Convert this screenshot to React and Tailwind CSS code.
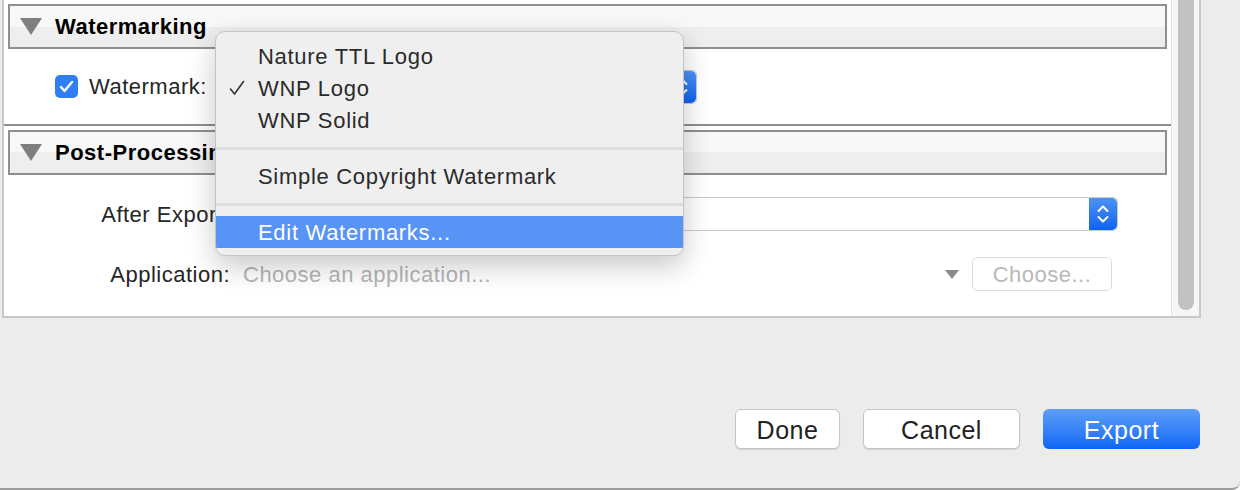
import React from 'react';

const Triangle = () => (
  <svg width="22" height="17" viewBox="0 0 22 17">
    <path d="M0 0 H22 L11 17 Z" fill="#7f7f7f" />
  </svg>
);

const Stepper = () => (
  <div className="flex h-full w-[28px] items-center justify-center rounded-r-[5px] bg-gradient-to-b from-[#4b93f8] to-[#0b62ee]">
    <svg width="14" height="22" viewBox="0 0 14 22" fill="none" stroke="white" strokeWidth="2" strokeLinecap="round" strokeLinejoin="round">
      <path d="M2.5 8 L7 3.5 L11.5 8" />
      <path d="M2.5 14 L7 18.5 L11.5 14" />
    </svg>
  </div>
);

const SectionHeader = ({ title }) => (
  <div className="mx-1 flex h-[45px] items-center border-2 border-[#8f8f8f] bg-[linear-gradient(to_bottom,#f8f8f8_50%,#eeeeee_50%)] pl-[10px]">
    <Triangle />
    <span className="ml-[13px] text-[22px] font-bold tracking-[0.5px] text-black">{title}</span>
  </div>
);

const MenuItem = ({ label, checked, active }) => (
  <div
    className={
      active
        ? 'relative flex h-[32px] items-center bg-[#5893f6] pl-[42px] text-white'
        : 'relative flex h-[32px] items-center pl-[42px] text-[#2b2b2b]'
    }
  >
    {checked && (
      <svg className="absolute left-[13px] top-[8px]" width="16" height="16" viewBox="0 0 16 16" fill="none" stroke="#333" strokeWidth="1.6" strokeLinecap="round" strokeLinejoin="round">
        <path d="M1.5 9 L5.5 14 L14.5 1.5" />
      </svg>
    )}
    <span>{label}</span>
  </div>
);

const Separator = () => (
  <div className="flex h-[24px] items-center">
    <div className="h-[3px] w-full bg-[#dedede]" />
  </div>
);

export default function App() {
  return (
    <div className="relative h-[490px] w-[1240px] overflow-hidden rounded-br-[8px] border-b-2 border-[#9d9d9d] bg-[#ececec] font-['Liberation_Sans',Arial,sans-serif] text-[22px] tracking-[0.5px] text-[#262626]">
      {/* settings panel */}
      <div className="ml-[2px] flex h-[318px] w-[1199px] border-x-2 border-b-2 border-[#c8c8c8] bg-white">
        <div className="flex-1">
          {/* Watermarking */}
          <div className="pt-1">
            <SectionHeader title="Watermarking" />
            <div className="flex h-[77px] items-center border-b-2 border-[#8f8f8f] pl-[51px]">
              <div className="flex h-[23px] w-[23px] items-center justify-center rounded-[5px] bg-[#2f7ef6]">
                <svg width="15" height="13" viewBox="0 0 15 13" fill="none" stroke="white" strokeWidth="2.4" strokeLinecap="round" strokeLinejoin="round">
                  <path d="M2 7 L5.5 11 L13 2" />
                </svg>
              </div>
              <span className="ml-[11px]">Watermark:</span>
              <div className="ml-[11px] flex h-[34px] w-[479px] justify-end rounded-[5px] border border-[#c9c9c9] bg-white">
                <Stepper />
              </div>
            </div>
          </div>

          {/* Post-Processing */}
          <div className="pt-1">
            <SectionHeader title="Post-Processing" />
            <div className="flex flex-col gap-[26px] pt-[22px]">
              <div className="flex items-center">
                <span className="w-[226px] text-right">After Export:</span>
                <div className="ml-[13px] flex h-[34px] w-[875px] justify-end rounded-[5px] border border-[#c9c9c9] bg-white">
                  <Stepper />
                </div>
              </div>
              <div className="flex items-center">
                <span className="w-[226px] text-right">Application:</span>
                <div className="ml-[13px] flex w-[869px] items-center">
                  <span className="flex-1 text-[#b5b5b5]">Choose an application...</span>
                  <svg width="14" height="9" viewBox="0 0 14 9">
                    <path d="M0 0 H14 L7 9 Z" fill="#8a8a8a" />
                  </svg>
                  <div className="ml-[13px] flex h-[34px] w-[140px] items-center justify-center rounded-[5px] border border-[#dcdcdc] text-[#b9b9b9]">
                    Choose...
                  </div>
                </div>
              </div>
            </div>
          </div>
        </div>

        {/* scrollbar */}
        <div className="w-[28px] border-l border-[#e2e2e2] bg-[#f6f6f6] pl-[6px]">
          <div className="h-[310px] w-[16px] rounded-b-full bg-[#c2c2c2]" />
        </div>
      </div>

      {/* dialog buttons */}
      <div className="mt-[91px] flex justify-end gap-[23px] pr-[40px] text-[25px]">
        <div className="flex h-[40px] w-[105px] items-center justify-center rounded-[6px] border border-[#c6c6c6] bg-white pt-[3px] text-[#222] shadow-[0_1px_1px_rgba(0,0,0,0.12)]">
          Done
        </div>
        <div className="flex h-[40px] w-[157px] items-center justify-center rounded-[6px] border border-[#c6c6c6] bg-white pt-[3px] text-[#222] shadow-[0_1px_1px_rgba(0,0,0,0.12)]">
          Cancel
        </div>
        <div className="flex h-[40px] w-[157px] items-center justify-center rounded-[6px] bg-gradient-to-b from-[#5c9ef9] to-[#0a66f4] pt-[3px] text-white">
          Export
        </div>
      </div>

      {/* popup menu */}
      <div className="absolute left-[215px] top-[31px] h-[225px] w-[469px] overflow-hidden rounded-[10px] border border-[#c4c4c4] bg-[#efefef] py-[8px] tracking-[0.7px] shadow-[0_10px_28px_rgba(0,0,0,0.22)]">
        <MenuItem label="Nature TTL Logo" />
        <MenuItem label="WNP Logo" checked />
        <MenuItem label="WNP Solid" />
        <Separator />
        <MenuItem label="Simple Copyright Watermark" />
        <Separator />
        <MenuItem label="Edit Watermarks..." active />
      </div>
    </div>
  );
}
